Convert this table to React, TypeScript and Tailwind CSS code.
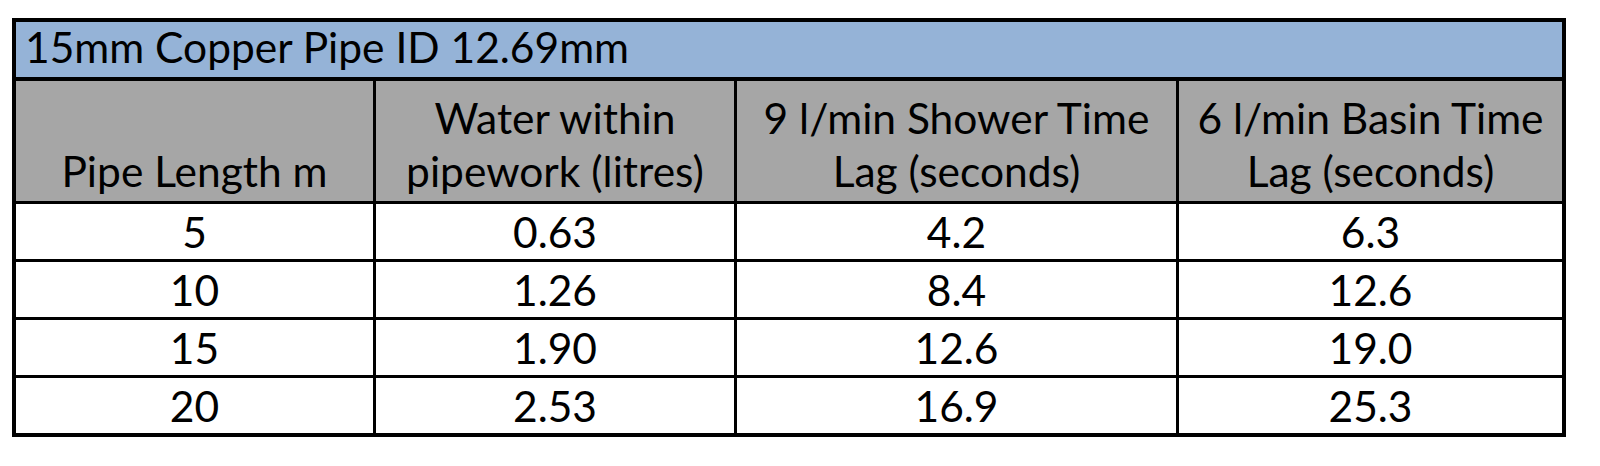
const rows = [
  ["5", "0.63", "4.2", "6.3"],
  ["10", "1.26", "8.4", "12.6"],
  ["15", "1.90", "12.6", "19.0"],
  ["20", "2.53", "16.9", "25.3"],
];

const headers: string[][] = [
  ["Pipe Length m"],
  ["Water within", "pipework (litres)"],
  ["9 l/min Shower Time", "Lag (seconds)"],
  ["6 l/min Basin Time", "Lag (seconds)"],
];

const cols = "grid grid-cols-[357px_358px_439px_383px] gap-[3px]";

export default function App() {
  return (
    <div className="min-h-screen bg-white pl-[12px] pt-[18px] font-['Lato',sans-serif] text-black">
      <div className="flex w-fit flex-col gap-[3px] border-4 border-black bg-black">
        <div className="mb-[1px] h-[55px] bg-[#95b3d7] pl-[9px] pt-[1px] text-[42.5px] leading-[48px]">
          15mm Copper Pipe ID 12.69mm
        </div>
        <div className={cols}>
          {headers.map((h, i) => (
            <div
              key={i}
              className="flex h-[120px] flex-col items-center justify-end bg-[#a6a6a6] pb-[4px] text-center text-[42.5px] leading-[53px]"
            >
              {h.map((line) => (
                <span key={line} className="whitespace-nowrap">
                  {line}
                </span>
              ))}
            </div>
          ))}
        </div>
        {rows.map((r, i) => (
          <div key={i} className={cols}>
            {r.map((v, j) => (
              <div
                key={j}
                className="flex h-[55px] items-center justify-center bg-white text-[42.5px] leading-[42px]"
              >
                {v}
              </div>
            ))}
          </div>
        ))}
      </div>
    </div>
  );
}
